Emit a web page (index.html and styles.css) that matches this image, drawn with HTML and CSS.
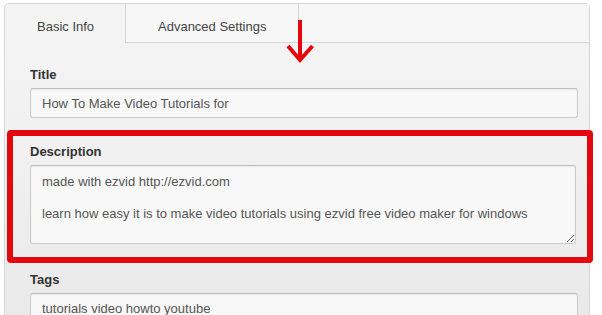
FILE: index.html
```html
<!DOCTYPE html>
<html>
<head>
<meta charset="utf-8">
<title>Video details</title>
<link rel="stylesheet" href="styles.css">
</head>
<body>
<div class="stage">
  <div class="panel">
    <div class="tabs">
      <div class="tab active">Basic Info</div>
      <div class="tab">Advanced Settings</div>
      <div class="tab-filler"></div>
    </div>
    <div class="content">
      <div class="field">
        <div class="label">Title</div>
        <div class="input">How To Make Video Tutorials for</div>
      </div>
      <div class="field">
        <div class="label">Description</div>
        <textarea class="textarea" spellcheck="false">made with ezvid http://ezvid.com

learn how easy it is to make video tutorials using ezvid free video maker for windows</textarea>
      </div>
      <div class="field field-tags">
        <div class="label">Tags</div>
        <div class="input">tutorials video howto youtube</div>
      </div>
    </div>
  </div>
  <div class="highlight"></div>
  <svg class="arrow" width="34" height="48" viewBox="0 0 34 48">
    <path d="M16 2 V42" stroke="#e3070f" stroke-width="4" fill="none"/>
    <path d="M4 28 L16 42 L28.5 28" stroke="#e3070f" stroke-width="4" fill="none" stroke-linejoin="miter"/>
  </svg>
</div>
</body>
</html>
```

FILE: styles.css
```css
html, body {
  margin: 0;
  padding: 0;
  background: #ffffff;
}

body {
  font-family: "Liberation Sans", Arial, sans-serif;
  font-size: 13px;
  line-height: 16px;
  color: #555555;
}

.stage {
  position: relative;
  width: 602px;
  height: 315px;
  overflow: hidden;
}

.panel {
  box-sizing: border-box;
  margin: 3px 0 0 4px;
  width: 586px;
  height: 340px;
  border: 1px solid #d6d6d6;
  border-radius: 5px 5px 0 0;
  background: linear-gradient(#f4f4f4 0%, #f1f1f1 40%, #e8e8e8 100%);
}

.tabs {
  display: flex;
  height: 39px;
}

.tab {
  padding: 15px 32px 0;
  color: #444444;
  border-right: 1px solid #d6d6d6;
  border-bottom: 1px solid #d6d6d6;
  background: #f7f7f7;
  white-space: nowrap;
}

.tab.active {
  width: 56px;
  border-bottom: none;
  background: #f4f4f4;
  border-top-left-radius: 4px;
}

.tab-filler {
  flex: 1;
  border-bottom: 1px solid #d6d6d6;
  background: #f6f6f6;
}

.content {
  display: flex;
  flex-direction: column;
  gap: 26px;
  padding: 24px 11px 0 25px;
}

.field-tags {
  margin-top: 2px;
}

.label {
  font-weight: bold;
  color: #333333;
  margin-bottom: 5px;
}

.input {
  box-sizing: border-box;
  height: 30px;
  padding: 7px 11px 0;
  border: 1px solid #cbcbcb;
  border-top-color: #bdbdbd;
  border-radius: 3px;
  background: #f8f8f8;
  box-shadow: inset 0 1px 2px rgba(0, 0, 0, 0.06);
  white-space: nowrap;
  overflow: hidden;
}

.textarea {
  display: block;
  box-sizing: border-box;
  width: 546px;
  height: 79px;
  margin: 0;
  padding: 8px 11px 6px;
  border: 1px solid #cbcbcb;
  border-top-color: #bdbdbd;
  border-radius: 3px;
  background: #f8f8f8;
  box-shadow: inset 0 1px 2px rgba(0, 0, 0, 0.06);
  font-family: "Liberation Sans", Arial, sans-serif;
  font-size: 13px;
  line-height: 16px;
  color: #555555;
  resize: both;
  outline: none;
  overflow: hidden;
}

.highlight {
  position: absolute;
  left: 7px;
  top: 130px;
  width: 586px;
  height: 133px;
  box-sizing: border-box;
  border: 6px solid #e3070f;
  border-radius: 4px;
  pointer-events: none;
}

.arrow {
  position: absolute;
  left: 284px;
  top: 18px;
}
```
